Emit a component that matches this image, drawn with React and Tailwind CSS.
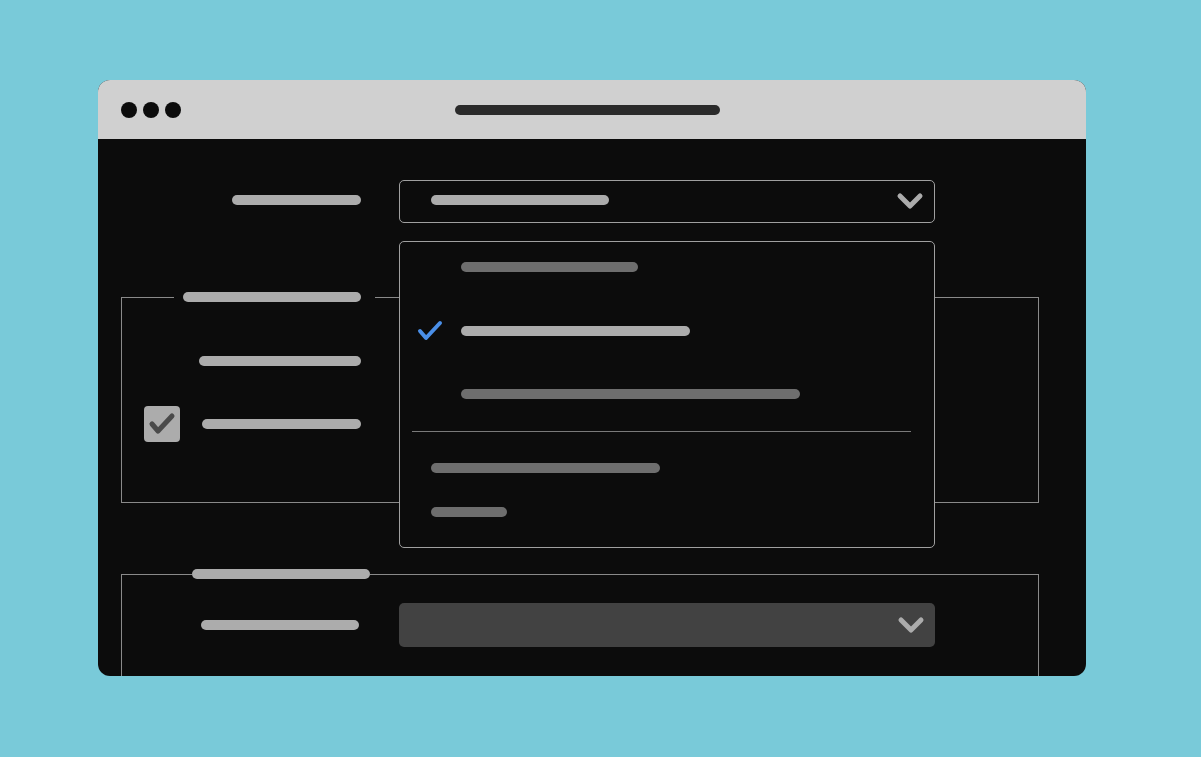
import React from "react";

// grey placeholder bar, stands in for text
function Bar({ w, tone = "light", className = "" }) {
  const color = tone === "light" ? "bg-[#acacac]" : "bg-[#6e6e6e]";
  return <div className={`h-[10px] rounded-full ${color} ${className}`} style={{ width: w }} />;
}

function Chevron({ className = "" }) {
  return (
    <svg width="28" height="20" viewBox="0 0 28 20" className={className}>
      <path d="M4 5 L14 15 L24 5" fill="none" stroke="#acacac" strokeWidth="5" strokeLinecap="round" strokeLinejoin="round" />
    </svg>
  );
}

function Check({ color, width = 4 }) {
  return (
    <svg width="28" height="24" viewBox="0 0 28 24">
      <path d="M4 12 L10 19 L24 4" fill="none" stroke={color} strokeWidth={width} strokeLinecap="round" strokeLinejoin="round" />
    </svg>
  );
}

function Dropdown() {
  return (
    <div className="absolute left-0 right-0 top-[61px] z-10 h-[307px] rounded-[5px] border border-[#a0a0a0] bg-[#0c0c0c]">
      <div className="flex h-[50px] items-center pl-[61px]">
        <Bar w={177} tone="dark" />
      </div>
      <div className="flex h-[78px] items-center gap-[17px] pl-[16px]">
        <Check color="#4a8fe8" />
        <Bar w={229} />
      </div>
      <div className="flex h-[48px] items-center pl-[61px]">
        <Bar w={339} tone="dark" />
      </div>
      <div className="ml-[12px] mr-[23px] mt-[13px] h-px bg-[#7a7a7a]" />
      <div className="flex flex-col gap-[34px] pl-[31px] pt-[31px]">
        <Bar w={229} tone="dark" />
        <Bar w={76} tone="dark" />
      </div>
    </div>
  );
}

export default function App() {
  return (
    <div className="flex h-[757px] w-[1201px] items-start bg-[#79cad9] pl-[98px] pt-[80px]">
      <div className="flex h-[596px] w-[988px] flex-col overflow-hidden rounded-[12px] bg-[#0c0c0c]">
        {/* title bar */}
        <div className="flex h-[59px] shrink-0 items-center bg-[#d0d0d0] pl-[23px]">
          <div className="flex gap-[6px]">
            <span className="h-[16px] w-[16px] rounded-full bg-[#0c0c0c]" />
            <span className="h-[16px] w-[16px] rounded-full bg-[#0c0c0c]" />
            <span className="h-[16px] w-[16px] rounded-full bg-[#0c0c0c]" />
          </div>
          <div className="ml-[274px] h-[10px] w-[265px] rounded-full bg-[#2a2a2a]" />
        </div>

        {/* body */}
        <div className="flex-1 overflow-hidden">
          <div className="grid grid-cols-[263px_536px] gap-x-[38px] pt-[41px]">
            <div className="flex items-center justify-end pb-[3px]">
              <Bar w={129} />
            </div>
            <div className="relative">
              <div className="flex h-[43px] items-center justify-between rounded-[5px] border border-[#a0a0a0] pb-[3px] pl-[31px] pr-[10px]">
                <Bar w={178} />
                <Chevron className="mt-[2px]" />
              </div>
              <Dropdown />
            </div>
          </div>

          <fieldset className="ml-[23px] mt-[69px] h-[211px] w-[918px] border border-[#8a8a8a]">
            <legend className="ml-[52px] pl-[9px] pr-[14px]">
              <Bar w={178} />
            </legend>
            <div className="grid w-[239px] grid-rows-[40px_40px] gap-y-[23px] pt-[39px]">
              <div className="flex items-center justify-end">
                <Bar w={162} />
              </div>
              <div className="flex items-center justify-between pl-[22px]">
                <div className="flex h-[36px] w-[36px] items-center justify-center rounded-[4px] bg-[#acacac]">
                  <Check color="#4a4a4a" width={5} />
                </div>
                <Bar w={159} />
              </div>
            </div>
          </fieldset>

          <fieldset className="ml-[23px] mt-[66px] h-[200px] w-[918px] border border-[#8a8a8a]">
            <legend className="ml-[70px]">
              <Bar w={178} />
            </legend>
            <div className="grid grid-cols-[237px_536px] gap-x-[40px] pt-[24px]">
              <div className="flex items-center justify-end">
                <Bar w={158} />
              </div>
              <div className="flex h-[44px] items-center justify-end rounded-[5px] bg-[#424242] pr-[10px]">
                <Chevron />
              </div>
            </div>
          </fieldset>
        </div>
      </div>
    </div>
  );
}
